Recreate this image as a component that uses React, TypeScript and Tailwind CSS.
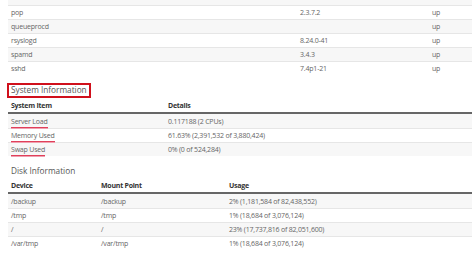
import React from "react";

const font = { fontFamily: '"Open Sans", "Liberation Sans", sans-serif' };

function Row({ cols, cells, striped, first }: { cols: string; cells: React.ReactNode[]; striped: boolean; first?: boolean }) {
  return (
    <div
      className={`grid h-[14px] items-center text-[7px] tracking-[-0.2px] text-[#666] ${first ? "" : "border-t border-[#e6e6e6]"} ${striped ? "bg-[#f7f7f7]" : "bg-white"}`}
      style={{ gridTemplateColumns: cols }}
    >
      {cells.map((c, i) => (
        <div key={i} className="pl-[3px] whitespace-nowrap leading-none">
          {c}
        </div>
      ))}
    </div>
  );
}

function Header({ cols, cells, tall }: { cols: string; cells: string[]; tall?: boolean }) {
  return (
    <div
      className={`grid ${tall ? "h-[16px]" : "h-[15px]"} items-center text-[7px] tracking-[-0.25px] font-bold text-[#333] border-b-2 border-[#666]`}
      style={{ gridTemplateColumns: cols }}
    >
      {cells.map((c, i) => (
        <div key={i} className="pl-[3px] whitespace-nowrap leading-none">
          {c}
        </div>
      ))}
    </div>
  );
}

function Squiggle({ children }: { children: React.ReactNode }) {
  return (
    <span className="relative inline-block">
      {children}
      <span className="absolute left-0 right-0 bottom-[-3px] h-[1px] bg-[#e0405a]" />
      <span className="absolute left-0 right-0 bottom-[-4px] h-[1px] bg-[#f0a0b0]" />
    </span>
  );
}

export default function App() {
  const topCols = "289px 132px 1fr";
  const sysCols = "157px 1fr";
  const diskCols = "90px 128px 1fr";
  return (
    <div className="w-[474px] h-[266px] overflow-hidden bg-white" style={font}>
      <div className="ml-[8px] mr-[2px] mt-[-9px]">
        <Row cols={topCols} cells={["", "", ""]} striped first />
        <Row cols={topCols} cells={["pop", "2.3.7.2", "up"]} striped={false} />
        <Row cols={topCols} cells={["queueprocd", "", "up"]} striped />
        <Row cols={topCols} cells={["rsyslogd", "8.24.0-41", "up"]} striped={false} />
        <Row cols={topCols} cells={["spamd", "3.4.3", "up"]} striped />
        <Row cols={topCols} cells={["sshd", "7.4p1-21", "up"]} striped={false} />

        <div className="mt-[8px] ml-[-1px] inline-flex h-[15px] items-center border-2 border-[#d0101c] px-[2px] text-[8.25px] text-[#555] leading-none">
          System Information
        </div>
        <Header cols={sysCols} cells={["System Item", "Details"]} />
        <Row cols={sysCols} cells={[<Squiggle>Server Load</Squiggle>, "0.117188 (2 CPUs)"]} striped first />
        <Row cols={sysCols} cells={[<Squiggle>Memory Used</Squiggle>, "61.63% (2,391,532 of 3,880,424)"]} striped={false} />
        <Row cols={sysCols} cells={[<Squiggle>Swap Used</Squiggle>, "0% (0 of 524,284)"]} striped />

        <div className="mt-[8px] h-[14px] flex items-center pl-[3px] text-[8.25px] text-[#555] leading-none">
          Disk Information
        </div>
        <Header cols={diskCols} cells={["Device", "Mount Point", "Usage"]} tall />
        <Row cols={diskCols} cells={["/backup", "/backup", "2% (1,181,584 of 82,438,552)"]} striped first />
        <Row cols={diskCols} cells={["/tmp", "/tmp", "1% (18,684 of 3,076,124)"]} striped={false} />
        <Row cols={diskCols} cells={["/", "/", "23% (17,737,816 of 82,051,600)"]} striped />
        <Row cols={diskCols} cells={["/var/tmp", "/var/tmp", "1% (18,684 of 3,076,124)"]} striped={false} />
      </div>
    </div>
  );
}
